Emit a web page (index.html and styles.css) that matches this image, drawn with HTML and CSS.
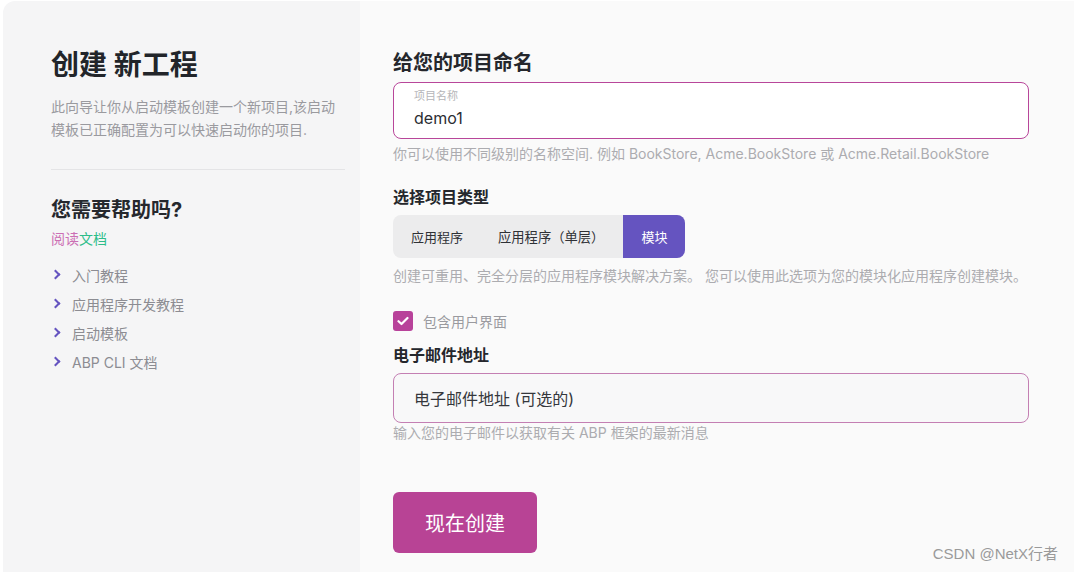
FILE: index.html
```html
<!DOCTYPE html>
<html lang="zh-CN">
<head>
    <meta charset="UTF-8">
    <title>创建新工程</title>
    <link rel="stylesheet" href="styles.css">
</head>
<body>
    <div class="card">
        <div class="side">
            <h1 class="side-title">创建 新工程</h1>
            <p class="side-desc">此向导让你从启动模板创建一个新项目,该启动模板已正确配置为可以快速启动你的项目.</p>
            <div class="side-line"></div>
            <h2 class="help-title">您需要帮助吗?</h2>
            <div class="read"><span class="read-a">阅读</span><span class="read-b">文档</span></div>
            <ul class="links">
                <li><span class="arrow"></span>入门教程</li>
                <li><span class="arrow"></span>应用程序开发教程</li>
                <li><span class="arrow"></span>启动模板</li>
                <li><span class="arrow"></span>ABP CLI 文档</li>
            </ul>
        </div>
        <div class="main">
            <h3 class="label">给您的项目命名</h3>
            <div class="field name-field">
                <div class="field-tag">项目名称</div>
                <div class="field-value">demo1</div>
            </div>
            <p class="hint">你可以使用不同级别的名称空间. 例如 BookStore, Acme.BookStore 或 Acme.Retail.BookStore</p>

            <h3 class="label label-type">选择项目类型</h3>
            <div class="seg">
                <span class="seg-item">应用程序</span>
                <span class="seg-item">应用程序（单层）</span>
                <span class="seg-item active">模块</span>
            </div>
            <p class="hint seg-hint">创建可重用、完全分层的应用程序模块解决方案。 您可以使用此选项为您的模块化应用程序创建模块。</p>

            <div class="check">
                <span class="check-box">
                    <svg width="12" height="10" viewBox="0 0 12 10"><path d="M1.5 5.2 L4.5 8 L10.5 2" fill="none" stroke="#fff" stroke-width="2.2" stroke-linecap="round" stroke-linejoin="round"/></svg>
                </span>
                <span class="check-text">包含用户界面</span>
            </div>

            <h3 class="label label-mail">电子邮件地址</h3>
            <div class="field mail-field">电子邮件地址 (可选的)</div>
            <p class="hint mail-hint">输入您的电子邮件以获取有关 ABP 框架的最新消息</p>

            <a class="btn">现在创建</a>
        </div>
    </div>
    <div class="mark">CSDN @NetX行者</div>
</body>
</html>
```

FILE: styles.css
```css
*{
    margin: 0;
    padding: 0;
    box-sizing: border-box;
}
body{
    background-color: #fff;
    font-family: Inter, "Noto Sans CJK SC", sans-serif;
    overflow: hidden;
}
.card{
    display: flex;
    margin: 1px 0 0 3px;
    height: 571px;
    border-radius: 12px 0 0 0;
    overflow: hidden;
}
.side{
    width: 357px;
    padding: 46px 15px 0 48px;
    background-color: #f5f5f6;
}
.side-title{
    font-size: 28px;
    line-height: 36px;
    font-weight: 700;
    color: #22252a;
}
.side-desc{
    margin-top: 12px;
    font-size: 14px;
    line-height: 23px;
    color: #9a9a9f;
}
.side-line{
    margin-top: 28px;
    height: 1px;
    background-color: #e4e4e6;
}
.help-title{
    margin-top: 27px;
    font-size: 20px;
    line-height: 26px;
    font-weight: 700;
    color: #26282d;
}
.read{
    margin-top: 6px;
    font-size: 14px;
    line-height: 20px;
}
.read-a{
    color: #cc6fb4;
}
.read-b{
    color: #2dbd8a;
}
.links{
    list-style: none;
    margin-top: 11px;
}
.links li{
    display: flex;
    align-items: center;
    height: 29px;
    font-size: 14px;
    color: #8c8c92;
}
.arrow{
    display: inline-block;
    width: 7px;
    height: 7px;
    margin: 0 13px 0 1px;
    border-right: 2px solid #6554c0;
    border-top: 2px solid #6554c0;
    transform: rotate(45deg);
}
.main{
    flex: 1;
    padding: 49px 45px 0 33px;
    background-color: #fafafa;
}
.label{
    font-size: 20px;
    line-height: 26px;
    font-weight: 700;
    color: #25272c;
}
.field{
    border: 1px solid #b8469a;
    border-radius: 8px;
    width: 636px;
}
.name-field{
    margin-top: 6px;
    height: 57px;
    padding: 6px 0 0 20px;
    background-color: #fff;
}
.field-tag{
    font-size: 11px;
    line-height: 15px;
    color: #b5b5b8;
}
.field-value{
    margin-top: 4px;
    font-size: 16px;
    line-height: 20px;
    color: #2b2d33;
}
.hint{
    margin-top: 6px;
    font-size: 14px;
    line-height: 17px;
    color: #acacb0;
}
.label-type{
    margin-top: 24px;
    font-size: 16px;
    line-height: 22px;
}
.seg{
    display: inline-flex;
    margin-top: 7px;
    height: 43px;
    border-radius: 8px;
    background-color: #ececed;
    overflow: hidden;
}
.seg-item{
    display: flex;
    align-items: center;
    padding: 0 17px 0 18px;
    font-size: 13px;
    color: #2f3136;
}
.seg .seg-item:nth-child(2){
    padding: 0 19px 0 18px;
    font-size: 13.3px;
}
.seg-item.active{
    padding: 0 18px;
    background-color: #6554c0;
    color: #fff;
}
.seg-hint{
    margin-top: 9px;
}
.check{
    display: flex;
    align-items: center;
    margin-top: 27px;
}
.check-box{
    display: flex;
    align-items: center;
    justify-content: center;
    width: 20px;
    height: 20px;
    border-radius: 3px;
    background-color: #b8429a;
}
.check-text{
    margin-left: 10px;
    font-size: 14px;
    color: #9a9a9f;
}
.label-mail{
    margin-top: 13px;
    font-size: 16px;
    line-height: 22px;
}
.mail-field{
    display: flex;
    align-items: center;
    margin-top: 7px;
    height: 50px;
    padding-left: 20px;
    border-color: #c47fb3;
    background-color: #f8f8f9;
    font-size: 16px;
    color: #35373c;
}
.mail-hint{
    margin-top: 1px;
}
.btn{
    display: flex;
    align-items: center;
    justify-content: center;
    margin-top: 51px;
    width: 144px;
    height: 61px;
    border-radius: 6px;
    background-color: #b84395;
    color: #fff;
    font-size: 20px;
    cursor: pointer;
}
.mark{
    position: absolute;
    right: 16px;
    bottom: 9px;
    font-family: "Liberation Sans", "Noto Sans CJK SC", sans-serif;
    font-size: 15px;
    color: #9a9a9a;
}
```
